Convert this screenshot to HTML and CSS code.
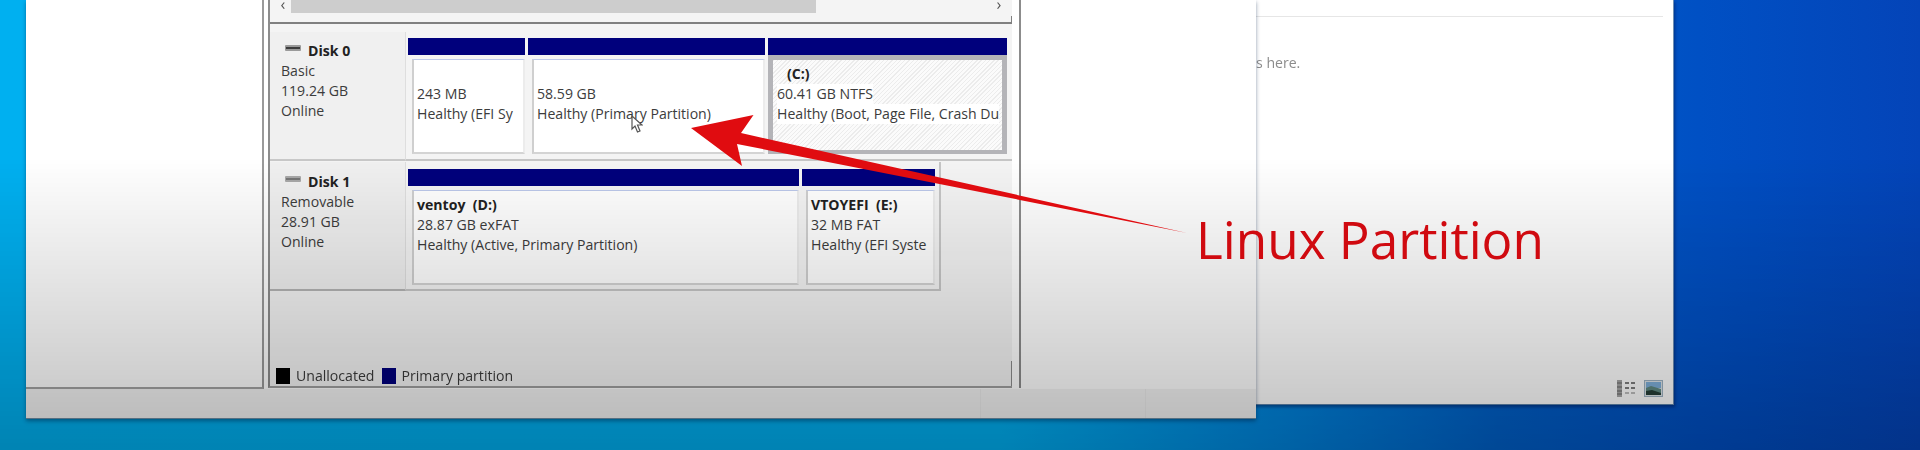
FILE: index.html
```html
<!DOCTYPE html>
<html lang="en">
<head>
<meta charset="utf-8">
<title>Disk Management</title>
<link rel="stylesheet" href="styles.css">
</head>
<body>
<div class="desktop">
  <section class="window back">
    <div class="back-head"></div>
    <p class="back-note">s here.</p>
    <div class="view-icons">
      <svg class="view-icon" viewBox="0 0 19 17"><rect x="0" y="0" width="5" height="17" fill="#a8a8a8"/><path d="M0 3h5M0 7h5M0 11h5M0 14h5" stroke="#666" stroke-width="1"/><path d="M8 3h4M14 3h4M8 8h4M14 8h4" stroke="#555" stroke-width="1.6"/><path d="M8 13h4M14 13h4" stroke="#aaa" stroke-width="1.6"/></svg>
      <svg class="view-icon" viewBox="0 0 19 17"><rect x=".5" y=".5" width="18" height="16" fill="#dfe6ea" stroke="#9fb4c4"/><rect x="2" y="2" width="15" height="6" fill="#7fb0da"/><path d="M2 8l5-2 10 3v6H2z" fill="#5f8a82"/><path d="M2 11l6-1 9 3v2H2z" fill="#263f38"/></svg>
    </div>
  </section>

  <section class="window main">
    <div class="main-body">
      <div class="nav"></div>
      <div class="pane">
        <div class="scroll">
          <span class="scroll-arrow">&#8249;</span>
          <div class="thumb"></div>
          <span class="scroll-arrow">&#8250;</span>
        </div>

        <div class="disk disk-0">
          <div class="disk-label">
            <div class="disk-name"><svg class="disk-icon" viewBox="0 0 16 9"><rect x="0" y="1" width="16" height="6" rx="1" fill="#9a9a9a"/><rect x="1" y="3" width="14" height="2" fill="#3c3c3c"/></svg>Disk 0</div>
            <div>Basic</div>
            <div>119.24 GB</div>
            <div>Online</div>
          </div>
          <div class="map map-0">
            <div class="part">
              <div class="part-head"></div>
              <div class="part-body">
                <div class="line">&nbsp;</div>
                <div class="line">243 MB</div>
                <div class="line">Healthy (EFI Sy</div>
              </div>
            </div>
            <div class="part">
              <div class="part-head"></div>
              <div class="part-body">
                <div class="line">&nbsp;</div>
                <div class="line">58.59 GB</div>
                <div class="line">Healthy (Primary Partition)</div>
              </div>
            </div>
            <div class="part selected">
              <div class="part-head"></div>
              <div class="part-body">
                <div class="line name drive-c">(C:)</div>
                <div class="line">60.41 GB NTFS</div>
                <div class="line">Healthy (Boot, Page File, Crash Du</div>
              </div>
            </div>
          </div>
        </div>

        <div class="disk disk-1">
          <div class="disk-label">
            <div class="disk-name"><svg class="disk-icon" viewBox="0 0 16 9"><rect x="0" y="1" width="16" height="6" rx="1" fill="#a8a8a8"/><rect x="1" y="3" width="14" height="2" fill="#777"/></svg>Disk 1</div>
            <div>Removable</div>
            <div>28.91 GB</div>
            <div>Online</div>
          </div>
          <div class="map map-1">
            <div class="part">
              <div class="part-head"></div>
              <div class="part-body">
                <div class="line name">ventoy&nbsp; (D:)</div>
                <div class="line">28.87 GB exFAT</div>
                <div class="line">Healthy (Active, Primary Partition)</div>
              </div>
            </div>
            <div class="part">
              <div class="part-head"></div>
              <div class="part-body">
                <div class="line name">VTOYEFI&nbsp; (E:)</div>
                <div class="line">32 MB FAT</div>
                <div class="line">Healthy (EFI Syste</div>
              </div>
            </div>
          </div>
        </div>

        <div class="legend">
          <span class="swatch swatch-free"></span><span>Unallocated</span>
          <span class="swatch swatch-primary"></span><span>Primary partition</span>
        </div>
      </div>
      <div class="divider"></div>
    </div>
    <div class="status">
      <div class="status-cell status-wide"></div>
      <div class="status-cell status-mid"></div>
    </div>
  </section>

  <svg class="cursor" viewBox="0 0 12 18"><path d="M1 1v13l3-3 2.500 6 2.500-1-2.500-6H11z" fill="#fff" stroke="#555" stroke-width="1.200"/></svg>
  <div class="vignette"></div>
  <svg class="arrow" viewBox="0 0 1920 450"><polygon points="691,128 753.500,115 741,133 1187,233 737,144 742,166" fill="#e00c10"/></svg>
  <div class="callout">Linux Partition</div>
</div>
</body>
</html>
```

FILE: styles.css
```css
* { box-sizing: border-box; }

html, body { margin: 0; padding: 0; }

body {
  width: 1920px;
  height: 450px;
  overflow: hidden;
  font-family: "Open Sans", "Noto Sans", sans-serif;
  font-size: 14.1px;
  line-height: 20px;
  color: #3c3c3c;
}

.desktop {
  position: relative;
  width: 1920px;
  height: 450px;
  overflow: hidden;
  background: linear-gradient(to right, #00b0f0 0%, #00aef0 52%, #0083dc 67%, #0060c8 78%, #0050c4 88.500%, #0444b8 100%);
}

.window {
  position: absolute;
  top: 0;
  background: #fff;
  filter: blur(0.4px);
}

.back {
  left: 1200px;
  width: 474px;
  height: 405px;
  display: flex;
  flex-direction: column;
  padding: 0 10px 7px 56px;
  border-right: 1px solid #6f8fb4;
  border-bottom: 1px solid #5f86ad;
  box-shadow: 1px 2px 3px rgba(0, 20, 80, .5);
}

.back-head {
  height: 17px;
  flex: none;
  border-bottom: 1px solid #e6e6e6;
}

.back-note {
  margin: 36px 0 0;
  color: #8c8c8c;
}

.view-icons {
  margin-top: auto;
  display: flex;
  justify-content: flex-end;
  gap: 8px;
}

.view-icon {
  display: block;
  width: 19px;
  height: 17px;
}

.main {
  left: 26px;
  width: 1230px;
  height: 419px;
  display: flex;
  flex-direction: column;
  border-bottom: 1px solid #6d8fa8;
  box-shadow: 0 2px 4px rgba(0, 30, 70, .45);
}

.main-body {
  height: 389px;
  flex: none;
  display: flex;
}

.nav {
  width: 238px;
  flex: none;
  border-right: 2px solid #9a9a9a;
  border-bottom: 2px solid #a4a4a4;
}

.pane {
  width: 744px;
  height: 388px;
  flex: none;
  margin-left: 4px;
  display: flex;
  flex-direction: column;
  background: #f4f4f4;
  border-left: 2px solid #8c8c8c;
  border-bottom: 2px solid #a0a0a0;
}

.scroll {
  position: relative;
  height: 24px;
  flex: none;
  display: flex;
  align-items: flex-start;
  padding: 0 6px;
  border-bottom: 2px solid #808080;
}

.scroll::after {
  content: "";
  position: absolute;
  right: 0;
  bottom: 0;
  width: 1px;
  height: 6px;
  background: #808080;
}

.scroll-arrow {
  width: 14px;
  flex: none;
  font-size: 16px;
  line-height: 8px;
  text-align: center;
  color: #555;
}

.thumb {
  width: 529px;
  height: 13px;
  margin: 0 176px 0 1px;
  background: #cdcdcd;
}

.disk {
  display: flex;
  height: 129px;
  flex: none;
}

.disk-0 { margin-top: 8px; }
.disk-1 { margin-top: 1px; }

.disk-label {
  width: 136px;
  flex: none;
  padding: 9px 0 0 11px;
  background: #f0f0f0;
  border-right: 1px solid #dedede;
  border-bottom: 2px solid #b4b4b4;
}

.disk-0 .disk-label { border-bottom-color: #c8c8c8; }
.disk-1 .disk-label { padding-top: 10px; }

.disk-name {
  display: flex;
  align-items: center;
  font-weight: 700;
  color: #222;
}

.disk-icon {
  width: 16px;
  height: 9px;
  margin: -6px 7px 0 4px;
}

.map {
  display: grid;
  padding: 6px 0 0 2px;
  column-gap: 3px;
  align-content: start;
  border-bottom: 2px solid #c6c6c6;
}

.map-0 {
  width: 606px;
  grid-template-columns: 117px 237px 239px;
}

.map-1 {
  width: 535px;
  padding-top: 7px;
  grid-template-columns: 391px 133px;
  border-right: 2px solid #c6c6c6;
}

.part {
  height: 116px;
  min-width: 0;
  display: flex;
  flex-direction: column;
}

.part-head {
  height: 17px;
  flex: none;
  background: #00007c;
}

.part-body {
  flex: 1;
  min-height: 0;
  overflow: hidden;
  margin: 4px 0 0 4px;
  padding: 4px 0 0 3px;
  background: #fff;
  border-left: 2px solid #cfcfcf;
  border-right: 2px solid #ececec;
  border-top: 1px solid #bcc8ea;
  border-bottom: 2px solid #d4d4d4;
  white-space: nowrap;
}

.line {
  height: 20px;
}

.name {
  font-weight: 700;
  color: #222;
}

.selected .part-body {
  margin: 0;
  padding: 4px 0 0 4px;
  border: 5px solid #b4b4b8;
  border-bottom-width: 4px;
  background: repeating-linear-gradient(135deg, #ececec 0 1px, #fbfbfb 1px 3px);
}

.selected .line {
  width: fit-content;
  background: #fff;
}

.selected .drive-c {
  margin-left: 10px;
  background: transparent;
}

.legend {
  height: 25px;
  margin-top: auto;
  padding: 4px 0 0 6px;
  display: flex;
  align-items: center;
  border-right: 1px solid #8c8c8c;
}

.swatch {
  width: 14px;
  height: 16px;
  flex: none;
  margin-right: 6px;
}

.swatch-free { background: #000; }

.swatch-primary {
  margin-left: 7px;
  background: #00007c;
}

.divider {
  width: 2px;
  height: 388px;
  flex: none;
  margin-left: 7px;
  background: #8c8c8c;
}

.status {
  flex: 1;
  display: flex;
  background: #f4f4f4;
}

.status-cell {
  border-right: 1px solid #ececec;
}

.status-wide { width: 955px; }
.status-mid { width: 165px; }

.cursor {
  position: absolute;
  left: 631px;
  top: 115px;
  width: 12px;
  height: 18px;
}

.vignette {
  position: absolute;
  inset: 0;
  background: linear-gradient(to bottom, rgba(0, 0, 0, 0) 35%, rgba(0, 0, 0, .25) 100%);
  pointer-events: none;
}

.arrow {
  position: absolute;
  inset: 0;
  width: 1920px;
  height: 450px;
}

.callout {
  position: absolute;
  left: 1196px;
  top: 204px;
  font-size: 51.3px;
  line-height: 70px;
  color: #d00a10;
  white-space: nowrap;
}
```
